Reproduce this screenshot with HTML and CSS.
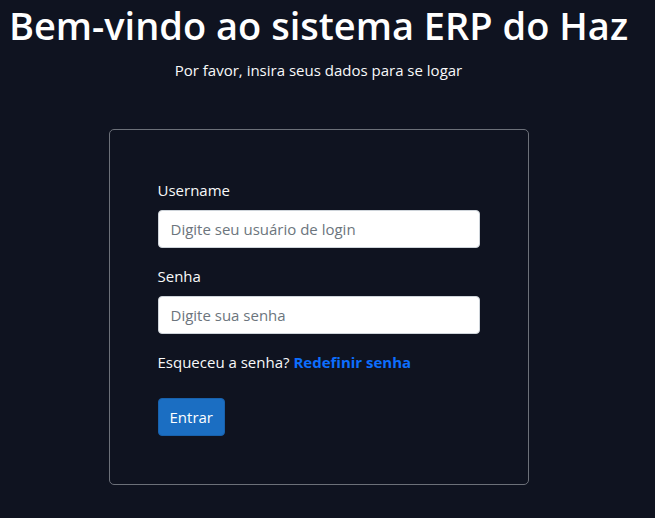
FILE: index.html
```html
<!DOCTYPE html>
<html lang="pt-BR">
<head>
<meta charset="utf-8">
<title>Login</title>
<link rel="stylesheet" href="styles.css">
</head>
<body>
<main class="page">
  <h1 class="title">Bem-vindo ao sistema ERP do Haz</h1>
  <p class="subtitle">Por favor, insira seus dados para se logar</p>
  <form class="card">
    <div class="field">
      <label class="label" for="user">Username</label>
      <input class="input" id="user" type="text" placeholder="Digite seu usuário de login">
    </div>
    <div class="field">
      <label class="label" for="pass">Senha</label>
      <input class="input" id="pass" type="password" placeholder="Digite sua senha">
    </div>
    <p class="forgot">Esqueceu a senha? <a class="link" href="#">Redefinir senha</a></p>
    <div class="actions">
      <button class="btn" type="button">Entrar</button>
    </div>
  </form>
</main>
</body>
</html>
```
FILE: styles.css
```css
* { box-sizing: border-box; }
html, body { margin: 0; padding: 0; }
body {
  background: #0f1320;
  color: #f8f9fa;
  font-family: "Open Sans", "Noto Sans", sans-serif;
  font-size: 16px;
  line-height: 24px;
  height: 518px;
  overflow: hidden;
}
.page {
  width: 637px;
  display: flex;
  flex-direction: column;
  align-items: center;
}
.title {
  margin: 0;
  padding-top: 2px;
  font-size: 38px;
  font-weight: 600;
  line-height: 46px;
  white-space: nowrap;
  color: #ffffff;
}
.subtitle {
  margin: 10px 0 0;
  font-size: 15px;
  line-height: 24px;
}
.card {
  margin-top: 47px;
  width: 420px;
  border: 1px solid #6c7079;
  border-radius: 5px;
  padding: 48px;
  display: flex;
  flex-direction: column;
}
.field {
  display: flex;
  flex-direction: column;
  margin-bottom: 16px;
}
.label {
  font-size: 15px;
  line-height: 24px;
  margin-bottom: 8px;
}
.input {
  height: 38px;
  width: 100%;
  border: 1px solid #ced4da;
  border-radius: 4px;
  background: #fff;
  padding: 6px 12px;
  font-family: inherit;
  font-size: 15px;
  color: #212529;
}
.input::placeholder { color: #6c757d; }
.forgot {
  margin: 0 0 24px;
  font-size: 15px;
  line-height: 24px;
}
.link {
  color: #0d6efd;
  font-weight: 700;
  text-decoration: none;
}
.actions { display: flex; }
.btn {
  height: 38px;
  padding: 6px 11px;
  border: 1px solid #1861ac;
  border-radius: 4px;
  background: #1b6ec2;
  color: #fff;
  font-family: inherit;
  font-size: 15px;
}
```
